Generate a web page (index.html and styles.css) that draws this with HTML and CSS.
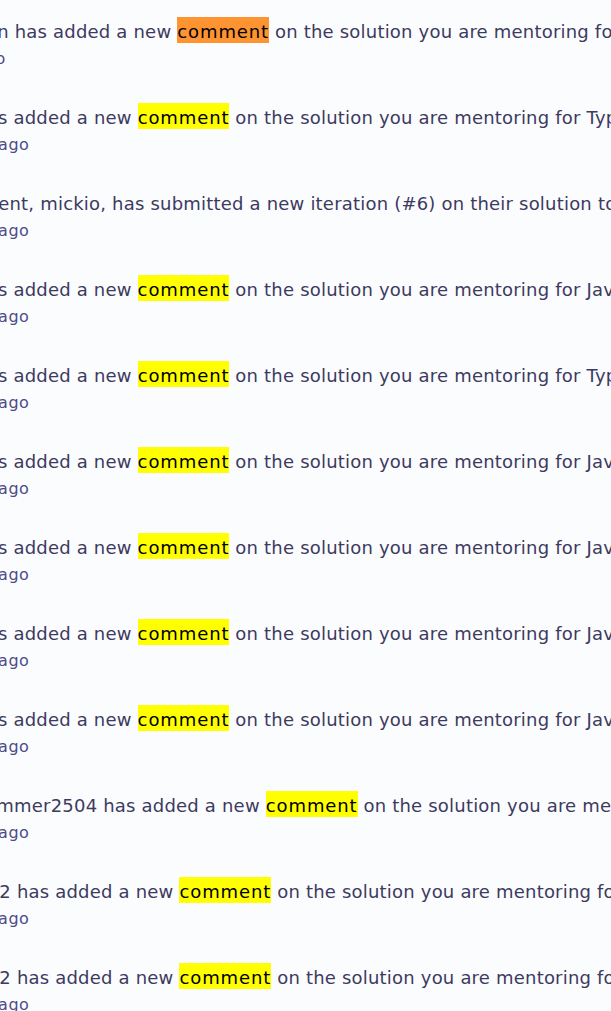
FILE: index.html
```html
<!DOCTYPE html>
<html lang="en">
<head>
<meta charset="utf-8">
<title>Notifications</title>
<link rel="stylesheet" href="styles.css">
</head>
<body>
<div class="viewport">
  <ul class="notifications">
    <li class="item">
      <p class="message">kostiantyn has added a new <span class="mark mark-new">comment</span> on the solution you are mentoring for Python/Raindrops</p>
      <p class="time">4 days ago</p>
    </li>
    <li class="item">
      <p class="message">robert has added a new <span class="mark">comment</span> on the solution you are mentoring for TypeScript/Two Fer</p>
      <p class="time">2 months ago</p>
    </li>
    <li class="item">
      <p class="message">Your student, mickio, has submitted a new iteration (#6) on their solution to Java/Two Fer</p>
      <p class="time">2 months ago</p>
    </li>
    <li class="item">
      <p class="message">daniel has added a new <span class="mark">comment</span> on the solution you are mentoring for Java/Hamming</p>
      <p class="time">2 months ago</p>
    </li>
    <li class="item">
      <p class="message">robert has added a new <span class="mark">comment</span> on the solution you are mentoring for TypeScript/Two Fer</p>
      <p class="time">2 months ago</p>
    </li>
    <li class="item">
      <p class="message">daniel has added a new <span class="mark">comment</span> on the solution you are mentoring for Java/Hamming</p>
      <p class="time">2 months ago</p>
    </li>
    <li class="item">
      <p class="message">daniel has added a new <span class="mark">comment</span> on the solution you are mentoring for Java/Hamming</p>
      <p class="time">2 months ago</p>
    </li>
    <li class="item">
      <p class="message">daniel has added a new <span class="mark">comment</span> on the solution you are mentoring for Java/Hamming</p>
      <p class="time">2 months ago</p>
    </li>
    <li class="item">
      <p class="message">daniel has added a new <span class="mark">comment</span> on the solution you are mentoring for Java/Hamming</p>
      <p class="time">2 months ago</p>
    </li>
    <li class="item">
      <p class="message">goprogrammer2504 has added a new <span class="mark">comment</span> on the solution you are mentoring for Go/Leap</p>
      <p class="time">2 months ago</p>
    </li>
    <li class="item">
      <p class="message">smith2022 has added a new <span class="mark">comment</span> on the solution you are mentoring for Ruby/Acronym</p>
      <p class="time">2 months ago</p>
    </li>
    <li class="item">
      <p class="message">smith2022 has added a new <span class="mark">comment</span> on the solution you are mentoring for Ruby/Acronym</p>
      <p class="time">2 months ago</p>
    </li>
  </ul>
</div>
</body>
</html>
```
FILE: styles.css
```css
html, body {
  margin: 0;
  padding: 0;
}

body {
  background: #fbfcfe;
  font-family: "DejaVu Sans", "Liberation Sans", sans-serif;
  color: #3d3a60;
  overflow: hidden;
}

.viewport {
  width: 100%;
  overflow: hidden;
}

.notifications {
  list-style: none;
  margin: 0 0 0 -87px;
  padding: 19px 0 0;
  display: flex;
  flex-direction: column;
  gap: 33px;
}

.item {
  white-space: nowrap;
}

.message {
  margin: 0;
  font-size: 18px;
  line-height: 26px;
  letter-spacing: 0.2px;
}

.mark {
  background: #ffff00;
  color: #000;
  padding: 4px 0 1px;
  letter-spacing: 0.9px;
}

.mark-new {
  background: #fe9331;
}

.time {
  margin: 0;
  font-size: 16px;
  line-height: 27px;
  letter-spacing: 0.5px;
  color: #4d4c86;
}
```
